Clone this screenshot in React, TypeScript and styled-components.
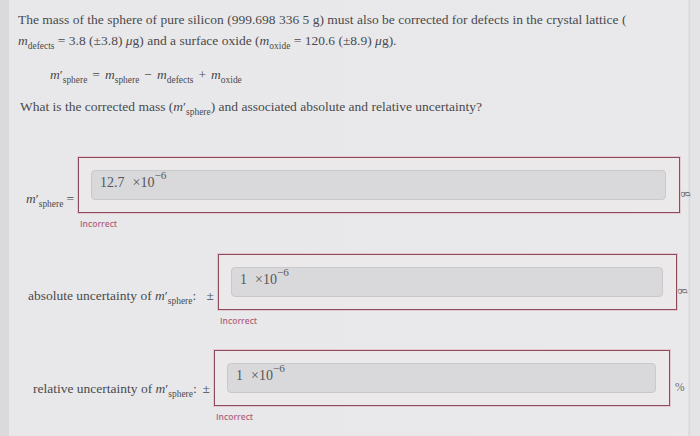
import React from "react";
import styled, { createGlobalStyle } from "styled-components";

const GlobalStyle = createGlobalStyle`
  html, body { margin: 0; padding: 0; background: #e7e7e9; }
`;

const Page = styled.div`
  width: 700px;
  height: 436px;
  box-sizing: border-box;
  overflow: hidden;
  background: linear-gradient(90deg, #dadadc 0, #dadadc 9px, #e8e8ea 9px, #e9e9eb 688px, #d6d6d8 689px, #e4e4e6 691px);
  padding: 9px 0 0 18px;
  font-family: "Liberation Serif", "Times New Roman", serif;
  color: #4a4a4c;
  font-size: 13.5px;
`;

const Para = styled.p`
  margin: 0;
  line-height: 21px;
  white-space: nowrap;
`;

const Formula = styled.p`
  margin: 14px 0 0 32px;
  line-height: 20px;
`;

const Question = styled.p`
  margin: 12px 0 0 2px;
  line-height: 20px;
`;

const M = styled.i`
  font-style: italic;
`;

const Sub = styled.sub`
  font-size: 0.7em;
  font-style: normal;
  vertical-align: -0.4em;
  line-height: 0;
`;

const Op = styled.span`
  margin: 0 5px;
`;

const Row = styled.div<{ $top: number }>`
  display: flex;
  align-items: flex-start;
  margin-top: ${({ $top }) => $top}px;
`;

const Label = styled.div<{ $width: number; $indent: number; $drop: number }>`
  width: ${({ $width }) => $width}px;
  padding-left: ${({ $indent }) => $indent}px;
  padding-right: 4px;
  padding-top: ${({ $drop }) => $drop}px;
  box-sizing: border-box;
  height: 56px;
  display: flex;
  align-items: center;
  justify-content: space-between;
  white-space: nowrap;
`;

const Field = styled.div<{ $width: number }>`
  display: flex;
  flex-direction: column;
  width: ${({ $width }) => $width}px;
`;

const Frame = styled.div`
  height: 56px;
  box-sizing: border-box;
  border: 1.5px solid #8c4a5c;
  box-shadow: 0 0 0 1px rgba(226, 160, 180, 0.45);
  background: #ebe9ea;
  padding: 12px 13px 12px 12px;
`;

const Input = styled.div`
  height: 30px;
  box-sizing: border-box;
  border: 1px solid #c9c8cb;
  border-radius: 4px;
  background: #d9d9dc;
  padding: 4px 8px 0;
  font-size: 14px;
  color: #565658;
  white-space: nowrap;
`;

const Times = styled.span`
  margin-left: 8px;
`;

const Exp = styled.sup`
  font-size: 0.8em;
  vertical-align: 0.7em;
  line-height: 0;
`;

const Msg = styled.div`
  margin-top: 5px;
  font-family: "Open Sans", "Liberation Sans", sans-serif;
  font-size: 8.5px;
  font-weight: 600;
  color: #b06482;
  padding-left: 2px;
`;

const Unit = styled.div<{ $rotate?: boolean }>`
  height: 56px;
  display: flex;
  align-items: center;
  padding-left: 5px;
  padding-top: 18px;
  box-sizing: border-box;
  font-size: 11.5px;
  color: #6a6a6c;
  span {
    display: inline-block;
    transform: ${({ $rotate }) => ($rotate ? "rotate(90deg)" : "none")};
  }
`;

const MSphere = () => (
  <>
    <M>m</M>′<Sub>sphere</Sub>
  </>
);

interface AnswerProps {
  top: number;
  labelWidth: number;
  indent: number;
  drop: number;
  fieldWidth: number;
  label: React.ReactNode;
  sign: string;
  value: string;
  unit: string;
  rotate?: boolean;
}

const Answer: React.FC<AnswerProps> = ({ top, labelWidth, indent, drop, fieldWidth, label, sign, value, unit, rotate }) => (
  <Row $top={top}>
    <Label $width={labelWidth} $indent={indent} $drop={drop}>
      <span>{label}</span>
      <span>{sign}</span>
    </Label>
    <Field $width={fieldWidth}>
      <Frame>
        <Input>
          {value}
          <Times>×10</Times>
          <Exp>−6</Exp>
        </Input>
      </Frame>
      <Msg>Incorrect</Msg>
    </Field>
    <Unit $rotate={rotate}>
      <span>{unit}</span>
    </Unit>
  </Row>
);

export default function App() {
  return (
    <>
      <GlobalStyle />
      <Page>
        <Para>
          The mass of the sphere of pure silicon (999.698 336 5 g) must also be corrected for defects in the crystal lattice (
          <br />
          <M>m</M>
          <Sub>defects</Sub> = 3.8 (±3.8) <M>μ</M>g) and a surface oxide (<M>m</M>
          <Sub>oxide</Sub> = 120.6 (±8.9) <M>μ</M>g).
        </Para>
        <Formula>
          <MSphere />
          <Op>=</Op>
          <M>m</M>
          <Sub>sphere</Sub>
          <Op>−</Op>
          <M>m</M>
          <Sub>defects</Sub>
          <Op>+</Op>
          <M>m</M>
          <Sub>oxide</Sub>
        </Formula>
        <Question>
          What is the corrected mass (<MSphere />) and associated absolute and relative uncertainty?
        </Question>
        <Answer
          top={40}
          labelWidth={60}
          indent={8}
          drop={28}
          fieldWidth={602}
          label={<MSphere />}
          sign="="
          value="12.7"
          unit="g"
          rotate
        />
        <Answer
          top={25}
          labelWidth={200}
          indent={10}
          drop={28}
          fieldWidth={459}
          label={
            <>
              absolute uncertainty of <MSphere />:
            </>
          }
          sign="±"
          value="1"
          unit="g"
          rotate
        />
        <Answer
          top={24}
          labelWidth={196}
          indent={15}
          drop={22}
          fieldWidth={456}
          label={
            <>
              relative uncertainty of <MSphere />:
            </>
          }
          sign="±"
          value="1"
          unit="%"
        />
      </Page>
    </>
  );
}
